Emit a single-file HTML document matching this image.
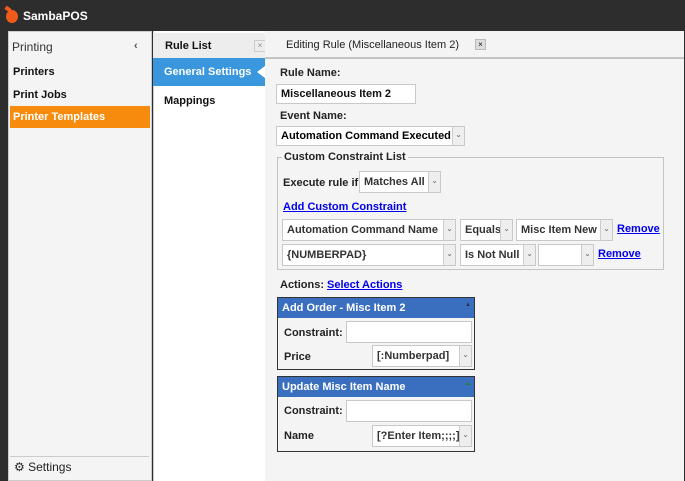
<!DOCTYPE html>
<html><head><style>
*{margin:0;padding:0;box-sizing:border-box}
body{width:685px;height:469px;overflow:hidden;background:#2d2d2d;font-family:"Liberation Sans",sans-serif;font-size:11px;color:#111;position:relative}
.a{position:absolute}
b{font-weight:bold}
.box{position:absolute;background:#fff;border:1px solid #c8c8c8;font-weight:bold;font-size:11px;padding-left:4px;line-height:18px;white-space:nowrap;overflow:hidden}
.dd{position:absolute;right:0;top:0;bottom:0;width:12px;background:#eee;border-left:1px solid #ccc;color:#777;font-size:7px;text-align:center;line-height:18px}
.lnk{color:#0000ee;text-decoration:underline;font-weight:bold}
.lbl{font-weight:bold;color:#222}
</style></head><body>
<div class="a" style="left:6px;top:10px;width:12px;height:13px;background:#f05a1a;border-radius:50%"></div>
<div class="a" style="left:5px;top:7px;width:6px;height:4px;background:#f05a1a;transform:rotate(35deg)"></div>
<div class="a" style="left:23px;top:9px;color:#fff;font-weight:bold;font-size:12px">SambaPOS</div>
<div class="a" style="left:8px;top:31px;width:144px;height:450px;background:#f4f4f4;border:1px solid #ccc"></div>
<div class="a" style="left:12px;top:40px;font-size:12px;color:#333">Printing</div>
<div class="a" style="left:134px;top:40px;font-size:11px;color:#555;font-weight:bold">‹</div>
<div class="a" style="left:13px;top:66px"><b>Printers</b></div>
<div class="a" style="left:13px;top:89px"><b>Print Jobs</b></div>
<div class="a" style="left:10px;top:106px;width:140px;height:22px;background:#f68b0e"></div>
<div class="a" style="left:13px;top:111px;color:#fff"><b>Printer Templates</b></div>
<div class="a" style="left:10px;top:456px;width:139px;height:1px;background:#ccc"></div>
<div class="a" style="left:14px;top:460px;font-size:12px;color:#222">⚙ Settings</div>
<div class="a" style="left:153px;top:31px;width:112px;height:450px;background:#fff;border-left:1px solid #ccc"></div>
<div class="a" style="left:153px;top:33px;width:112px;height:25px;background:#ededed"></div>
<div class="a" style="left:165px;top:40px"><b>Rule List</b></div>
<div class="a" style="left:254px;top:40px;width:12px;height:12px;border:1px solid #ccc;font-size:8px;color:#888;text-align:center;line-height:10px">×</div>
<div class="a" style="left:153px;top:58px;width:112px;height:28px;background:#3a96dd"></div>
<div class="a" style="left:164px;top:66px;color:#fff"><b>General Settings</b></div>
<div class="a" style="left:257px;top:66px;width:0;height:0;border-top:6px solid transparent;border-bottom:6px solid transparent;border-right:8px solid #fff"></div>
<div class="a" style="left:164px;top:95px"><b>Mappings</b></div>
<div class="a" style="left:265px;top:31px;width:419px;height:450px;background:#f4f4f4"></div>
<div class="a" style="left:265px;top:57px;width:419px;height:2px;background:#c4c4c4"></div>
<div class="a" style="left:286px;top:39px;color:#222">Editing Rule (Miscellaneous Item 2)</div>
<div class="a" style="left:475px;top:39px;width:11px;height:11px;background:#ddd;border:1px solid #bbb;font-size:8px;text-align:center;line-height:9px">×</div>
<div class="a lbl" style="left:280px;top:67px">Rule Name:</div>
<div class="box" style="left:276px;top:84px;width:140px;height:20px">Miscellaneous Item 2</div>
<div class="a lbl" style="left:280px;top:110px">Event Name:</div>
<div class="box" style="left:276px;top:126px;width:189px;height:20px;color:#000">Automation Command Executed<div class="dd">⌄</div></div>
<div class="a" style="left:277px;top:157px;width:387px;height:113px;border:1px solid #c4c4c4"></div>
<div class="a lbl" style="left:282px;top:151px;background:#f4f4f4;padding:0 2px">Custom Constraint List</div>
<div class="a lbl" style="left:283px;top:177px">Execute rule if</div>
<div class="box" style="left:359px;top:171px;width:82px;height:22px;line-height:20px;color:#333">Matches All<div class="dd" style="line-height:20px">⌄</div></div>
<div class="a lnk" style="left:283px;top:201px">Add Custom Constraint</div>
<div class="box" style="left:282px;top:219px;width:174px;height:22px;line-height:20px;color:#333">Automation Command Name<div class="dd" style="line-height:20px">⌄</div></div>
<div class="box" style="left:460px;top:219px;width:53px;height:22px;line-height:20px;color:#333">Equals<div class="dd" style="line-height:20px">⌄</div></div>
<div class="box" style="left:516px;top:219px;width:97px;height:22px;line-height:20px;color:#333">Misc Item New<div class="dd" style="line-height:20px">⌄</div></div>
<div class="a lnk" style="left:617px;top:223px">Remove</div>
<div class="box" style="left:282px;top:244px;width:174px;height:22px;line-height:20px;color:#333">{NUMBERPAD}<div class="dd" style="line-height:20px">⌄</div></div>
<div class="box" style="left:460px;top:244px;width:76px;height:22px;line-height:20px;color:#333">Is Not Null<div class="dd" style="line-height:20px">⌄</div></div>
<div class="box" style="left:538px;top:244px;width:56px;height:22px"><div class="dd" style="line-height:20px">⌄</div></div>
<div class="a lnk" style="left:598px;top:248px">Remove</div>
<div class="a lbl" style="left:280px;top:279px">Actions:</div>
<div class="a lnk" style="left:327px;top:279px">Select Actions</div>
<div class="a" style="left:277px;top:297px;width:198px;height:73px;border:1px solid #333;background:#f4f4f4"></div>
<div class="a" style="left:278px;top:298px;width:196px;height:20px;background:#3a6fc0"></div>
<div class="a" style="left:282px;top:302px;color:#fff"><b>Add Order - Misc Item 2</b></div>
<div class="a" style="left:465px;top:302px;font-size:6px;color:#234">▲</div>
<div class="a lbl" style="left:284px;top:327px">Constraint:</div>
<div class="box" style="left:346px;top:321px;width:126px;height:22px"></div>
<div class="a lbl" style="left:284px;top:351px">Price</div>
<div class="box" style="left:372px;top:345px;width:100px;height:22px;line-height:20px;color:#333">[:Numberpad]<div class="dd" style="line-height:20px">⌄</div></div>
<div class="a" style="left:277px;top:376px;width:198px;height:76px;border:1px solid #333;background:#f4f4f4"></div>
<div class="a" style="left:278px;top:377px;width:196px;height:20px;background:#3a6fc0"></div>
<div class="a" style="left:282px;top:381px;color:#fff"><b>Update Misc Item Name</b></div>
<div class="a" style="left:465px;top:381px;font-size:6px;color:#1a8a1a">▲</div>
<div class="a lbl" style="left:284px;top:405px">Constraint:</div>
<div class="box" style="left:346px;top:400px;width:126px;height:22px"></div>
<div class="a lbl" style="left:284px;top:430px">Name</div>
<div class="box" style="left:372px;top:425px;width:100px;height:22px;line-height:20px;color:#333">[?Enter Item;;;;]<div class="dd" style="line-height:20px">⌄</div></div>
</body></html>
